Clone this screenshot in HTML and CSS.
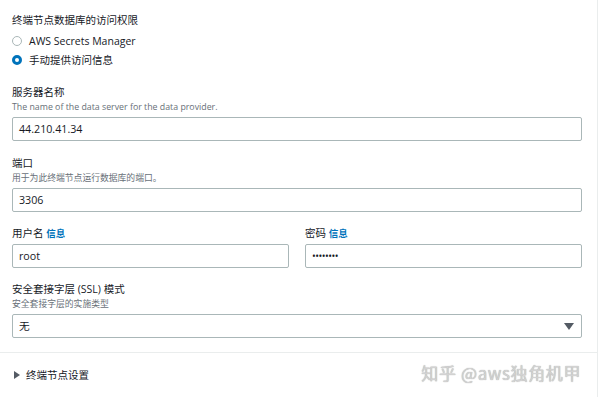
FILE: index.html
```html
<!DOCTYPE html>
<html lang="zh-CN">
<head>
    <meta charset="UTF-8">
    <title>终端节点数据库的访问权限</title>
    <link rel="stylesheet" href="styles.css">
</head>
<body>
    <div class="panel">
        <div class="group-title">终端节点数据库的访问权限</div>
        <div class="radios">
            <div class="radio-row">
                <span class="radio"></span>
                <span class="radio-text">AWS Secrets Manager</span>
            </div>
            <div class="radio-row">
                <span class="radio checked"></span>
                <span class="radio-text">手动提供访问信息</span>
            </div>
        </div>

        <div class="field first">
            <div class="label">服务器名称</div>
            <div class="desc">The name of the data server for the data provider.</div>
            <div class="input">44.210.41.34</div>
        </div>

        <div class="field">
            <div class="label">端口</div>
            <div class="desc">用于为此终端节点运行数据库的端口。</div>
            <div class="input">3306</div>
        </div>

        <div class="field-row">
            <div class="field">
                <div class="label">用户名 <span class="info">信息</span></div>
                <div class="input">root</div>
            </div>
            <div class="field">
                <div class="label">密码 <span class="info">信息</span></div>
                <div class="input password">••••••••</div>
            </div>
        </div>

        <div class="field">
            <div class="label">安全套接字层 (SSL) 模式</div>
            <div class="desc">安全套接字层的实施类型</div>
            <div class="input select">
                <span>无</span>
                <span class="arrow"></span>
            </div>
        </div>

        <div class="expander">
            <span class="caret"></span>
            <span>终端节点设置</span>
        </div>

        <div class="watermark">知乎 @aws独角机甲</div>
    </div>
</body>
</html>
```

FILE: styles.css
```css
:root {
    --text: #16191f;
    --muted: #687078;
    --border: #aab7b8;
    --blue: #0073bb;
    --line: #eaeded;
}

* {
    margin: 0;
    padding: 0;
    box-sizing: border-box;
}

body {
    background: #fff;
    font-family: "Open Sans", "Noto Sans CJK SC", sans-serif;
    color: var(--text);
    width: 600px;
    height: 397px;
    overflow: hidden;
}

.panel {
    position: relative;
    width: 598px;
    height: 397px;
    border-right: 1px solid var(--line);
    padding: 12px 15px 0 12px;
}

.group-title {
    font-size: 10.5px;
    line-height: 16px;
}

.radios {
    margin-top: 3px;
}

.radio-row {
    display: flex;
    align-items: center;
    height: 19px;
    font-size: 10.5px;
}

.radio {
    width: 10px;
    height: 10px;
    border: 1px solid var(--border);
    border-radius: 50%;
    margin-right: 7px;
    background: #fff;
}

.radio.checked {
    border: 3px solid var(--blue);
}

.field {
    margin-top: 15px;
}

.field.first {
    margin-top: 16px;
}

.label {
    font-size: 10.5px;
    line-height: 15px;
}

.info {
    color: var(--blue);
    font-size: 9.5px;
    font-weight: bold;
}

.desc {
    font-size: 8.8px;
    line-height: 14px;
    color: var(--muted);
}

.input {
    margin-top: 3px;
    height: 24px;
    border: 1px solid var(--border);
    border-radius: 2px;
    padding: 0 6px;
    font-size: 10.7px;
    line-height: 22px;
    display: flex;
    align-items: center;
}

.field-row {
    display: grid;
    grid-template-columns: 277px 277px;
    gap: 16px;
}

.field-row .field {
    margin-top: 14px;
}

.field-row .input {
    margin-top: 3px;
}

.field-row + .field {
    margin-top: 14px;
}

.password {
    font-size: 10px;
    letter-spacing: -0.5px;
}

.select {
    justify-content: space-between;
}

.arrow {
    width: 0;
    height: 0;
    border-left: 5px solid transparent;
    border-right: 5px solid transparent;
    border-top: 7px solid #545b64;
    margin-right: 1px;
}

.expander {
    margin: 14px -15px 0 -12px;
    border-top: 1px solid var(--line);
    padding: 14px 14px 0;
    display: flex;
    align-items: center;
    gap: 6px;
    font-size: 10.5px;
    line-height: 16px;
}

.caret {
    width: 0;
    height: 0;
    border-top: 4px solid transparent;
    border-bottom: 4px solid transparent;
    border-left: 6px solid #545b64;
}

.watermark {
    position: absolute;
    right: 16px;
    top: 362px;
    font-size: 17px;
    line-height: 22px;
    letter-spacing: 0.6px;
    color: #d2d2d2;
    text-shadow: 0 0 1px #9a9a9a;
    font-family: "Noto Sans CJK SC", sans-serif;
}
```
